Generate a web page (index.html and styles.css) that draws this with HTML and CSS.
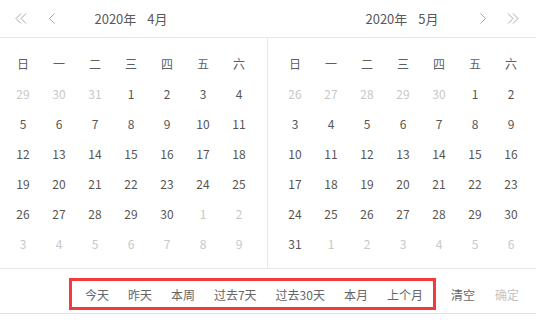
FILE: index.html
```html
<!DOCTYPE html>
<html>
	<head>
		<meta charset="utf-8">
		<title>日期范围</title>
		<link rel="stylesheet" href="styles.css">
	</head>
	<body>
		<div class="picker">
			<div class="panels">
				<div class="panel panel-left">
					<div class="head">
						<div class="arrows arrows-left">
							<svg class="dbl" width="12" height="11" viewBox="0 0 12 11"><path d="M6 .5 1 5.5l5 5M11 .5 6 5.5l5 5"/></svg>
							<svg class="one" width="6" height="11" viewBox="0 0 6 11"><path d="M5.5 .5 .5 5.5l5 5"/></svg>
						</div>
						<div class="title"><span>2020年</span><span class="mon">4月</span></div>
						<div></div>
					</div>
					<div class="body">
						<div class="week"><span>日</span><span>一</span><span>二</span><span>三</span><span>四</span><span>五</span><span>六</span></div>
						<div class="row"><span class="off">29</span><span class="off">30</span><span class="off">31</span><span>1</span><span>2</span><span>3</span><span>4</span></div>
						<div class="row"><span>5</span><span>6</span><span>7</span><span>8</span><span>9</span><span>10</span><span>11</span></div>
						<div class="row"><span>12</span><span>13</span><span>14</span><span>15</span><span>16</span><span>17</span><span>18</span></div>
						<div class="row"><span>19</span><span>20</span><span>21</span><span>22</span><span>23</span><span>24</span><span>25</span></div>
						<div class="row"><span>26</span><span>27</span><span>28</span><span>29</span><span>30</span><span class="off">1</span><span class="off">2</span></div>
						<div class="row"><span class="off">3</span><span class="off">4</span><span class="off">5</span><span class="off">6</span><span class="off">7</span><span class="off">8</span><span class="off">9</span></div>
					</div>
				</div>
				<div class="panel panel-right">
					<div class="head">
						<div></div>
						<div class="title"><span>2020年</span><span class="mon">5月</span></div>
						<div class="arrows arrows-right">
							<svg class="one" width="6" height="11" viewBox="0 0 6 11"><path d="M.5 .5l5 5-5 5"/></svg>
							<svg class="dbl" width="12" height="11" viewBox="0 0 12 11"><path d="M1 .5l5 5-5 5M6 .5l5 5-5 5"/></svg>
						</div>
					</div>
					<div class="body">
						<div class="week"><span>日</span><span>一</span><span>二</span><span>三</span><span>四</span><span>五</span><span>六</span></div>
						<div class="row"><span class="off">26</span><span class="off">27</span><span class="off">28</span><span class="off">29</span><span class="off">30</span><span>1</span><span>2</span></div>
						<div class="row"><span>3</span><span>4</span><span>5</span><span>6</span><span>7</span><span>8</span><span>9</span></div>
						<div class="row"><span>10</span><span>11</span><span>12</span><span>13</span><span>14</span><span>15</span><span>16</span></div>
						<div class="row"><span>17</span><span>18</span><span>19</span><span>20</span><span>21</span><span>22</span><span>23</span></div>
						<div class="row"><span>24</span><span>25</span><span>26</span><span>27</span><span>28</span><span>29</span><span>30</span></div>
						<div class="row"><span>31</span><span class="off">1</span><span class="off">2</span><span class="off">3</span><span class="off">4</span><span class="off">5</span><span class="off">6</span></div>
					</div>
				</div>
			</div>
			<div class="foot">
				<div class="shortcuts">
					<span>今天</span>
					<span>昨天</span>
					<span>本周</span>
					<span>过去7天</span>
					<span>过去30天</span>
					<span>本月</span>
					<span>上个月</span>
				</div>
				<span class="btn clear">清空</span>
				<span class="btn ok">确定</span>
			</div>
		</div>
	</body>
</html>
```
FILE: styles.css
```css
body
{
	margin: 0;
	background-color: #ffffff;
	font-family: "Noto Sans CJK SC", "Noto Sans", sans-serif;
}

.picker
{
	width: 536px;
	background-color: #ffffff;
	border-bottom: 1px solid #e2e2e2;
	box-shadow: 0 2px 6px rgba(0, 0, 0, 0.08);
}

.panels
{
	display: grid;
	grid-template-columns: 268px 268px;
}

.head
{
	display: grid;
	grid-template-columns: 1fr auto 1fr;
	align-items: center;
	height: 37px;
	border-bottom: 1px solid #e8e8e8;
}

.panel-left .head
{
	padding-right: 6px;
}

.title
{
	font-size: 13px;
	color: #595959;
}

.title .mon
{
	margin-left: 11px;
}

.arrows
{
	display: flex;
	align-items: center;
}

.arrows svg
{
	display: block;
	fill: none;
	stroke: #a8a8a8;
	stroke-width: 1;
}

.arrows-left
{
	margin-left: 15px;
	gap: 22px;
}

.arrows-right
{
	justify-self: end;
	margin-right: 17px;
	gap: 21px;
}

.body
{
	padding: 10px 0 10px 5px;
	height: 210px;
}

.panel-left .body
{
	border-right: 1px solid #e8e8e8;
}

.panel-right .body
{
	padding-left: 9px;
}

.week, .row
{
	display: grid;
	grid-template-columns: repeat(7, 36px);
	height: 30px;
	align-items: center;
	text-align: center;
	font-size: 12px;
	color: #555555;
}

.week
{
	color: #5f5f5f;
}

.row .off
{
	color: #c8c8c8;
}

.foot
{
	display: flex;
	align-items: center;
	justify-content: flex-end;
	height: 38px;
	padding: 6px 17px 0 0;
	border-top: 1px solid #e8e8e8;
	font-size: 12px;
}

.shortcuts
{
	display: flex;
	gap: 19px;
	height: 26px;
	align-items: center;
	padding: 0 10px 0 13px;
	border: 3px solid #f23a3c;
	color: #666666;
}

.btn
{
	color: #666666;
}

.clear
{
	margin-left: 15px;
}

.ok
{
	margin-left: 20px;
	color: #c4c4c4;
}
```
